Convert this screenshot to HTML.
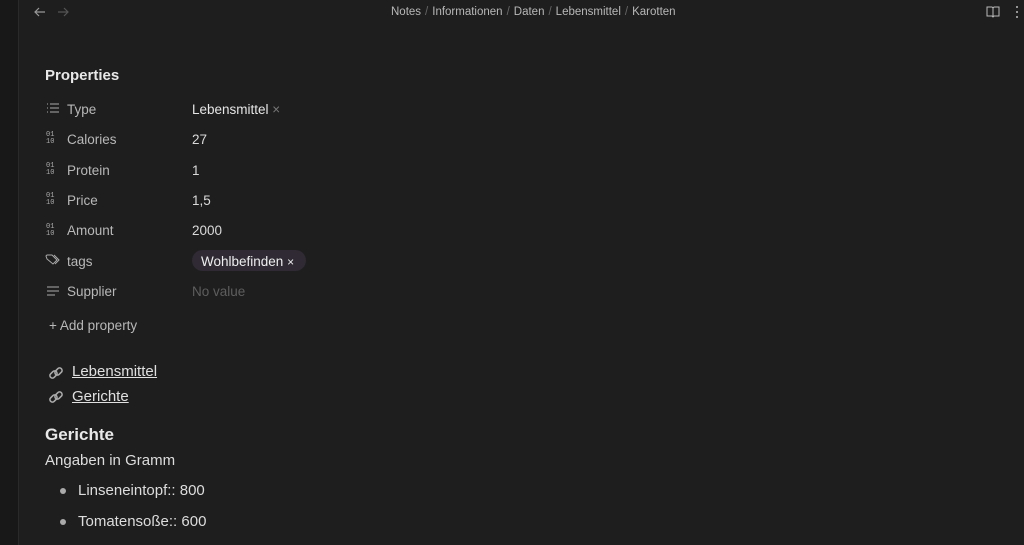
<!DOCTYPE html><html><head><style>
body{margin:0;width:1024px;height:545px;background:#1e1e1e;font-family:"Liberation Sans",sans-serif;color:#dadada;position:relative;overflow:hidden}
.side{position:absolute;left:0;top:0;width:18px;height:545px;background:#181818;border-right:1px solid #2a2a2a}
.a{position:absolute;white-space:nowrap}
.bc{top:6px;left:391px;font-size:11.5px;color:#b8b8b8}
.bc span{color:#666;margin:0 4px}
.k{font-size:13.5px;color:#b8b8b8}
.v{font-size:13.5px;color:#dadada}
svg{position:absolute}
a{color:#e0e0e0;text-decoration:underline}
</style></head><body>
<div class="side"></div>
<svg style="left:34px;top:6px" width="12" height="12" viewBox="0 0 12 12"><path d="M11 6H1M5 2L1 6l4 4" stroke="#999" fill="none" stroke-width="1.2"/></svg>
<svg style="left:57px;top:6px" width="12" height="12" viewBox="0 0 12 12"><path d="M1 6h10M7 2l4 4-4 4" stroke="#555" fill="none" stroke-width="1.2"/></svg>
<div class="a bc">Notes<span>/</span>Informationen<span>/</span>Daten<span>/</span>Lebensmittel<span>/</span>Karotten</div>
<svg style="left:986px;top:6px" width="14" height="12" viewBox="0 0 14 12"><path d="M1 1h5l1 1 1-1h5v9H8l-1 1-1-1H1zM7 2v9" stroke="#bbb" fill="none"/></svg>
<svg style="left:1015px;top:5px" width="4" height="14"><circle cx="2" cy="2" r="1" fill="#bbb"/><circle cx="2" cy="7" r="1" fill="#bbb"/><circle cx="2" cy="12" r="1" fill="#bbb"/></svg>
<div class="a" style="left:45px;top:67px;font-size:15px;font-weight:bold;color:#e8e8e8">Properties</div>
<svg style="left:46px;top:102px" width="14" height="12"><path d="M4 2h9M4 6h9M4 10h9" stroke="#aaa"/><path d="M1 2h1M1 6h1M1 10h1" stroke="#aaa"/></svg>
<div class="a k" style="left:67px;top:102px">Type</div>
<div class="a v" style="left:192px;top:102px;color:#e6e6e6">Lebensmittel <span style="color:#777">×</span></div>
<div class="a" style="left:46px;top:132px;font-size:7px;line-height:7px;color:#aaa;font-family:'Liberation Mono'">01<br>10</div><div class="a k" style="left:67px;top:132px">Calories</div><div class="a v" style="left:192px;top:132px">27</div>
<div class="a" style="left:46px;top:163px;font-size:7px;line-height:7px;color:#aaa;font-family:'Liberation Mono'">01<br>10</div><div class="a k" style="left:67px;top:163px">Protein</div><div class="a v" style="left:192px;top:163px">1</div>
<div class="a" style="left:46px;top:193px;font-size:7px;line-height:7px;color:#aaa;font-family:'Liberation Mono'">01<br>10</div><div class="a k" style="left:67px;top:193px">Price</div><div class="a v" style="left:192px;top:193px">1,5</div>
<div class="a" style="left:46px;top:224px;font-size:7px;line-height:7px;color:#aaa;font-family:'Liberation Mono'">01<br>10</div><div class="a k" style="left:67px;top:223px">Amount</div><div class="a v" style="left:192px;top:223px">2000</div>
<svg style="left:45px;top:254px" width="16" height="12"><path d="M1 2l1-1h5l5 5-4 4-6-5zM9 1l5 5-4 4" stroke="#aaa" fill="none"/></svg>
<div class="a k" style="left:67px;top:254px">tags</div>
<div class="a" style="left:192px;top:250px;height:21px;width:114px;border-radius:11px;background:#2f2a33"></div>
<div class="a v" style="left:201px;top:254px;color:#eee">Wohlbefinden <span style="font-size:12px">×</span></div>
<svg style="left:46px;top:285px" width="14" height="12"><path d="M1 2h12M1 6h12M1 10h8" stroke="#aaa"/></svg>
<div class="a k" style="left:67px;top:284px">Supplier</div><div class="a v" style="left:192px;top:284px;color:#5e5e5e">No value</div>
<div class="a k" style="left:49px;top:318px">+ Add property</div>
<svg style="left:48px;top:365px" width="16" height="16" viewBox="0 0 16 16"><g fill="none" stroke="#aaa" stroke-width="1.6"><rect x="1.5" y="7" width="8" height="5" rx="2.5" transform="rotate(-45 5.5 9.5)"/><rect x="6.5" y="4" width="8" height="5" rx="2.5" transform="rotate(-45 10.5 6.5)"/></g></svg>
<div class="a" style="left:72px;top:363px;font-size:15px"><a>Lebensmittel</a></div>
<svg style="left:48px;top:389px" width="16" height="16" viewBox="0 0 16 16"><g fill="none" stroke="#aaa" stroke-width="1.6"><rect x="1.5" y="7" width="8" height="5" rx="2.5" transform="rotate(-45 5.5 9.5)"/><rect x="6.5" y="4" width="8" height="5" rx="2.5" transform="rotate(-45 10.5 6.5)"/></g></svg>
<div class="a" style="left:72px;top:388px;font-size:15px"><a>Gerichte</a></div>
<div class="a" style="left:45px;top:425px;font-size:17px;font-weight:bold;color:#e8e8e8">Gerichte</div>
<div class="a" style="left:45px;top:452px;font-size:15px;color:#ddd">Angaben in Gramm</div>
<div class="a" style="left:60px;top:488px;width:6px;height:6px;border-radius:3px;background:#aaa"></div>
<div class="a" style="left:78px;top:482px;font-size:15px;color:#ddd">Linseneintopf:: 800</div>
<div class="a" style="left:60px;top:519px;width:6px;height:6px;border-radius:3px;background:#aaa"></div>
<div class="a" style="left:78px;top:513px;font-size:15px;color:#ddd">Tomatensoße:: 600</div>
</body></html>
